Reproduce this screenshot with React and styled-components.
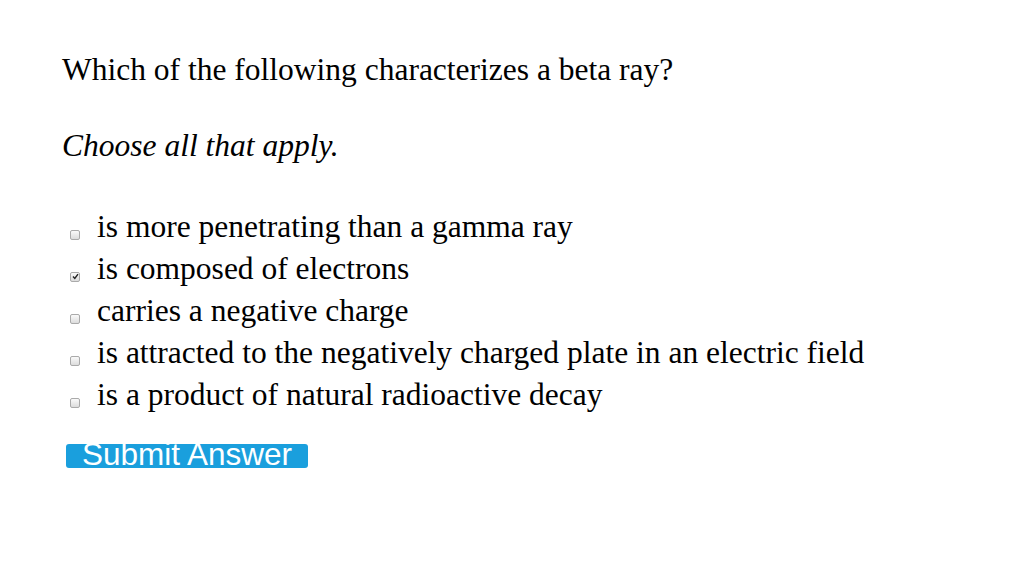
import React from "react";
import styled, { createGlobalStyle } from "styled-components";

const Global = createGlobalStyle`
  html, body { margin: 0; padding: 0; background: #fff; }
  body { font-family: "Liberation Serif", "Times New Roman", serif; color: #000; }
`;

const Page = styled.div`
  padding: 52px 0 0 62px;
`;

const Question = styled.p`
  margin: 0;
  font-size: 31.5px;
  line-height: 36px;
`;

const Hint = styled.p`
  margin: 40px 0 0;
  font-size: 31.5px;
  line-height: 36px;
  font-style: italic;
`;

const Options = styled.ul`
  list-style: none;
  margin: 42px 0 0;
  padding: 0;
`;

const Option = styled.li`
  display: flex;
  align-items: center;
  font-size: 31.5px;
  line-height: 42px;
  height: 42px;
`;

const Box = styled.span`
  box-sizing: border-box;
  width: 10px;
  height: 10px;
  margin: 15px 17px 0 8px;
  border: 1px solid #aaa;
  border-radius: 2px;
  background: linear-gradient(#fafafa, #dcdcdc);
  display: inline-flex;
  align-items: center;
  justify-content: center;
  flex: none;
`;

const Button = styled.button`
  margin: 28px 0 0 4px;
  width: 242px;
  height: 24px;
  padding: 0 0 3px;
  box-sizing: border-box;
  border: none;
  border-radius: 3px;
  background: #1a9fdd;
  color: #fff;
  font-family: "Liberation Sans", Arial, sans-serif;
  font-size: 31.5px;
  line-height: 21px;
  display: flex;
  align-items: center;
  justify-content: center;
  overflow: visible;
`;

const options = [
  { text: "is more penetrating than a gamma ray", checked: false },
  { text: "is composed of electrons", checked: true },
  { text: "carries a negative charge", checked: false },
  { text: "is attracted to the negatively charged plate in an electric field", checked: false },
  { text: "is a product of natural radioactive decay", checked: false },
];

export default function App() {
  return (
    <Page>
      <Global />
      <Question>Which of the following characterizes a beta ray?</Question>
      <Hint>Choose all that apply.</Hint>
      <Options>
        {options.map((o) => (
          <Option key={o.text}>
            <Box>
              {o.checked && (
                <svg width="7" height="7" viewBox="0 0 7 7">
                  <path d="M1 3.6 L2.8 5.4 L6 1.2" fill="none" stroke="#222" strokeWidth="1.4" />
                </svg>
              )}
            </Box>
            {o.text}
          </Option>
        ))}
      </Options>
      <Button>Submit Answer</Button>
    </Page>
  );
}
